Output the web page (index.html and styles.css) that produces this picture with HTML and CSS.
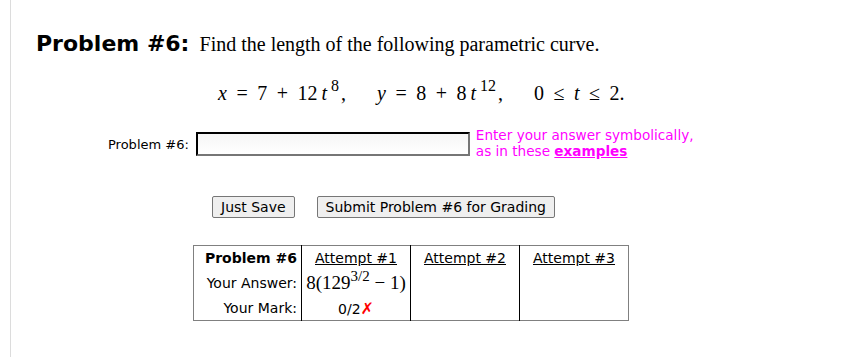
FILE: index.html
```html
<!DOCTYPE html>
<html lang="en">
<head>
    <meta charset="UTF-8">
    <title>Problem #6</title>
    <link rel="stylesheet" href="styles.css">
</head>
<body>
    <div class="page">
        <div class="statement">
            <span class="pnum">Problem #6:</span>
            <span class="prose">Find the length of the following parametric curve.</span>
        </div>
        <div class="equation">
            <i>x</i><span class="op">=</span>7<span class="op">+</span>12<i class="v">t</i><sup>8</sup>,<span class="sep"></span><i>y</i><span class="op">=</span>8<span class="op">+</span>8<i class="v">t</i><sup>12</sup>,<span class="sep"></span>0<span class="op">&le;</span><i>t</i><span class="op">&le;</span>2.
        </div>

        <div class="answer-row">
            <label class="answer-label" for="ans">Problem #6:</label>
            <input class="answer-input" id="ans" type="text">
            <div class="hint">
                Enter your answer symbolically,<br>
                as in these <a href="#">examples</a>
            </div>
        </div>

        <div class="buttons">
            <button class="btn">Just Save</button>
            <button class="btn">Submit Problem #6 for Grading</button>
        </div>

        <table class="attempts">
            <tr class="head">
                <td class="rowname"><strong>Problem #6</strong></td>
                <td><a href="#">Attempt #1</a></td>
                <td><a href="#">Attempt #2</a></td>
                <td><a href="#">Attempt #3</a></td>
            </tr>
            <tr class="ans">
                <td class="rowname">Your Answer:</td>
                <td class="math">8(129<sup>3/2</sup> &minus; 1)</td>
                <td></td>
                <td></td>
            </tr>
            <tr class="mark">
                <td class="rowname">Your Mark:</td>
                <td>0/2<span class="wrong">&#x2717;</span></td>
                <td></td>
                <td></td>
            </tr>
        </table>
    </div>
</body>
</html>
```

FILE: styles.css
```css
* {
    box-sizing: border-box;
}

body {
    margin: 0;
    background: #fff;
    color: #000;
    font-family: "DejaVu Sans", Verdana, sans-serif;
}

.page {
    margin-left: 10px;
    border-left: 1px solid #dcdcdc;
    min-height: 357px;
    padding: 31px 0 0 25px;
}

.statement {
    line-height: 26px;
}

.pnum {
    font-size: 22px;
    font-weight: bold;
}

.prose {
    font-family: "Liberation Serif", "Times New Roman", serif;
    font-size: 20px;
    margin-left: 5px;
}

.equation {
    font-family: "Liberation Serif", "Times New Roman", serif;
    font-size: 20px;
    line-height: 26px;
    margin: 21px 0 0 182px;
    white-space: nowrap;
}

.equation .op {
    margin: 0 9.5px;
}

.equation .v {
    margin-left: 4px;
}

.equation sup {
    font-size: 16px;
    margin-left: 4px;
    margin-right: 2px;
    vertical-align: 9px;
    line-height: 0;
}

.equation .sep {
    display: inline-block;
    width: 31px;
}

.answer-row {
    display: flex;
    align-items: center;
    margin: 23px 0 0 72px;
}

.answer-label {
    font-size: 13px;
    margin-right: 7px;
}

.answer-input {
    width: 274px;
    height: 24px;
    border: 2px inset #767676;
    border-top-color: #222;
    border-left-color: #222;
    background: linear-gradient(#f6f6f6, #fff);
    margin: 0;
}

.hint {
    color: #ff00ff;
    font-size: 13.6px;
    line-height: 16px;
    margin-left: 6px;
    margin-top: -2px;
}

.hint a {
    color: #ff00ff;
    font-weight: bold;
}

.buttons {
    display: flex;
    gap: 22px;
    margin: 37px 0 0 176px;
}

.btn {
    font-family: "DejaVu Sans", Verdana, sans-serif;
    font-size: 14px;
    height: 22px;
    padding: 0 8px;
    background: #efefef;
    border: 1px solid #767676;
    border-radius: 2px;
    color: #000;
}

.attempts {
    border-collapse: collapse;
    border: 1px solid #808080;
    margin: 27px 0 0 157px;
    font-size: 14px;
}

.attempts td {
    border-left: 1px solid #000;
    text-align: center;
    padding: 0 4px;
    width: 109px;
}

.attempts td:first-child {
    border-left: none;
}

.attempts .rowname {
    text-align: right;
    width: 108px;
}

.attempts a {
    color: #000;
}

.head td {
    height: 24px;
}

.ans td {
    height: 27px;
}

.mark td {
    height: 24px;
}

.math {
    font-family: "Liberation Serif", "Times New Roman", serif;
    font-size: 19px;
}

.math sup {
    font-size: 15px;
    vertical-align: 8px;
    line-height: 0;
}

.wrong {
    color: #ff0000;
    font-weight: bold;
    font-size: 16px;
}
```
